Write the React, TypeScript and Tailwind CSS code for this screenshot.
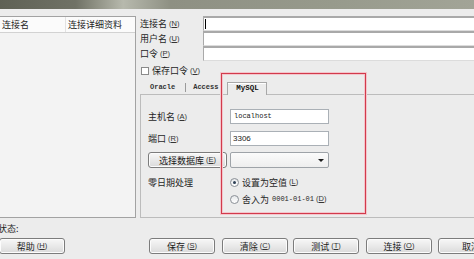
import React from "react";

const cjk = "font-['Noto_Sans_CJK_SC','Noto_Sans',sans-serif]";
const mono = "font-['Liberation_Mono','DejaVu_Sans_Mono',monospace]";

function Acc({ k }: { k: string }) {
  return (
    <span className="ml-[2px] font-['Liberation_Sans',sans-serif] text-[7.5px] text-[#333]">
      (<span className="underline">{k}</span>)
    </span>
  );
}

function Btn({ label, k, className = "" }: { label: string; k?: string; className?: string }) {
  return (
    <div
      className={
        "h-[16px] w-[66px] shrink-0 flex items-center justify-center rounded-[3px] border border-[#7c7c7c] bg-[linear-gradient(#f7f7f7,#e9e9e9_50%,#dadada)] shadow-[inset_0_0_0_1px_#fcfcfc] text-[9px] leading-none text-[#1a1a1a] " +
        className
      }
    >
      <span>{label}</span>
      {k && <Acc k={k} />}
    </div>
  );
}

function TopInput({ cursor }: { cursor?: boolean }) {
  return (
    <div className="flex-1 h-[15px] bg-white border-t-2 border-l border-[#a9a9a9] border-b border-b-[#dcdcdc] flex items-center pl-[1px]">
      {cursor && <div className="w-px h-[10px] bg-black" />}
    </div>
  );
}

function Radio({ checked }: { checked?: boolean }) {
  return (
    <div className="w-[9px] h-[9px] rounded-full border border-[#8a8f96] bg-[linear-gradient(#e6e8ea,#ffffff)] flex items-center justify-center shrink-0">
      {checked && <div className="w-[3px] h-[3px] rounded-full bg-[#2d3f55]" />}
    </div>
  );
}

export default function App() {
  return (
    <div className={"relative w-[474px] h-[259px] overflow-hidden bg-[#ececec] text-[9px] leading-none text-[#1e1e1e] " + cjk}>
      {/* title bar */}
      <div className="h-[9px] bg-[linear-gradient(to_right,#5f6155,#707266_16%,#8d8f82_20%,#b7b9ad_26%,#8e9083_36%,#979a8c_70%,#a2a497)]" />

      {/* main area */}
      <div className="flex h-[209px] pt-[7px]">
        {/* list view */}
        <div className="w-[136px] h-[202px] shrink-0 flex flex-col border-t border-r border-b border-[#a2a2a2]">
          <div className="h-[16px] bg-[#fbfbfb] border-b border-[#d2d2d2] flex items-center">
            <span className="w-[66px] pl-[2px] border-r border-[#e2e2e2] h-full flex items-center">连接名</span>
            <span className="pl-[2px]">连接详细资料</span>
          </div>
          <div className="flex-1 bg-[#f3f3f3]" />
        </div>

        {/* right side */}
        <div className="flex-1 flex flex-col pl-[4px]">
          <div className="flex h-[15px] items-center">
            <div className="w-[63px] flex items-center">连接名<Acc k="N" /></div>
            <TopInput cursor />
          </div>
          <div className="flex h-[15px] items-center">
            <div className="w-[63px] flex items-center">用户名<Acc k="U" /></div>
            <TopInput />
          </div>
          <div className="flex h-[15px] items-center">
            <div className="w-[63px] flex items-center">口令<Acc k="P" /></div>
            <TopInput />
          </div>

          {/* save password */}
          <div className="flex items-center h-[9px] mt-[5px] pl-[1px]">
            <div className="w-[8px] h-[8px] border border-[#8a8a8a] bg-white" />
            <span className="ml-[3px]">保存口令</span>
            <Acc k="V" />
          </div>

          {/* tabs */}
          <div className="flex items-end h-[13px] mt-[6px] relative z-10">
            <span className={"ml-[10px] mb-[3px] text-[7px] font-semibold text-[#333] " + mono}>Oracle</span>
            <span className="ml-[10px] mb-[2px] w-px h-[9px] bg-[#9a9a9a]" />
            <span className={"ml-[7px] mb-[3px] text-[7px] font-semibold text-[#333] " + mono}>Access</span>
            <div className="ml-[9px] w-[40px] h-[13px] -mb-px bg-[#ececec] border-t border-l border-r border-[#a8a8a8] shadow-[inset_0_1px_0_#ffffff] flex items-center justify-center">
              <span className={"text-[7.5px] font-bold text-[#111] " + mono}>MySQL</span>
            </div>
          </div>

          {/* tab panel */}
          <div className="h-[124px] border-t border-l border-b border-[#bcbcbc] pl-[7px] pt-[14px] flex flex-col">
            <div className="flex items-center h-[15px]">
              <div className="w-[82px] flex items-center">主机名<Acc k="A" /></div>
              <div className={"w-[99px] h-[15px] bg-white border border-[#aab0b6] flex items-center pl-[3px] text-[7px] text-[#222] " + mono}>localhost</div>
            </div>
            <div className="flex items-center h-[15px] mt-[7px]">
              <div className="w-[82px] flex items-center">端口<Acc k="R" /></div>
              <div className="w-[99px] h-[15px] bg-white border border-[#aab0b6] flex items-center pl-[2px] text-[8px] text-[#222] font-['Liberation_Sans',sans-serif]">3306</div>
            </div>
            <div className="flex items-center h-[16px] mt-[6px]">
              <Btn label="选择数据库" k="E" className="w-[79px]" />
              <div className="ml-[3px] w-[99px] h-[16px] rounded-[2px] border border-[#9ea3a8] bg-[linear-gradient(#fbfbfb,#eeeeee)] flex items-center justify-end pr-[4px]">
                <div className="w-0 h-0 border-l-[3px] border-r-[3px] border-t-[3px] border-l-transparent border-r-transparent border-t-[#1a1a1a]" />
              </div>
            </div>
            <div className="flex items-center h-[10px] mt-[9px]">
              <div className="w-[82px]">零日期处理</div>
              <Radio checked />
              <span className="ml-[3px]">设置为空值</span>
              <Acc k="L" />
            </div>
            <div className="flex items-center h-[10px] mt-[7px]">
              <div className="w-[82px]" />
              <Radio />
              <span className="ml-[3px]">舍入为</span>
              <span className={"ml-[3px] text-[7px] " + mono}>0001-01-01</span>
              <Acc k="D" />
            </div>
          </div>
        </div>
      </div>

      {/* status */}
      <div className="h-[20px] flex items-center -ml-[2px] pt-[1px]">状态:</div>

      {/* buttons */}
      <div className="flex items-center">
        <Btn label="帮助" k="H" className="-ml-px w-[61px]" />
        <Btn label="保存" k="S" className="ml-[84px]" />
        <Btn label="清除" k="C" className="ml-[7px]" />
        <Btn label="测试" k="T" className="ml-[5px]" />
        <Btn label="连接" k="O" className="ml-[7px]" />
        <Btn label="取消" className="ml-[6px]" />
      </div>

      {/* red annotation rectangle */}
      <div className="absolute left-[221px] top-[73px] w-[145px] h-[141px] border border-[#d23a4c] shadow-[0_0_0_1px_#f3c6cc,inset_0_0_0_1px_#f3c6cc]" />
    </div>
  );
}
